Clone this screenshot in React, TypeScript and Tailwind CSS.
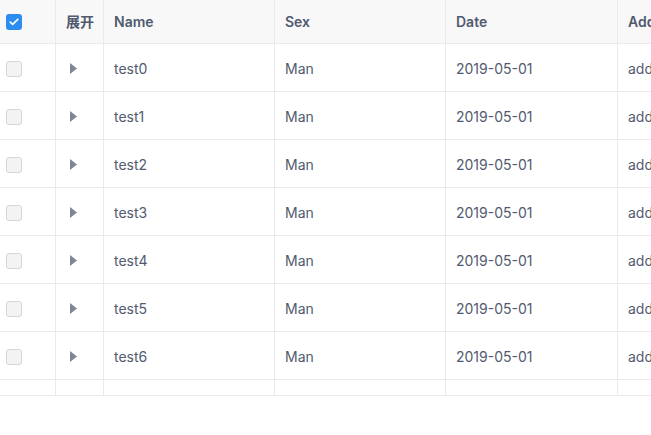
import React from "react";

const rows = Array.from({ length: 8 }, (_, i) => ({
  name: `test${i}`,
  sex: "Man",
  date: "2019-05-01",
  address: `address${i}`,
}));

const grid =
  "grid grid-cols-[56px_48px_171px_171px_172px_240px] w-[858px]";
const cell = "border-r border-[#e8eaec] flex items-center";

function Checkbox({ checked }: { checked?: boolean }) {
  if (checked) {
    return (
      <span className="flex h-4 w-4 items-center justify-center rounded-[3px] bg-[#2d8cf0]">
        <svg viewBox="0 0 16 16" className="h-3 w-3">
          <path
            d="M3 8.2l3.2 3L13 4.5"
            fill="none"
            stroke="white"
            strokeWidth="2.2"
            strokeLinecap="round"
            strokeLinejoin="round"
          />
        </svg>
      </span>
    );
  }
  return (
    <span className="block h-4 w-4 rounded-[3px] border border-[#d3d6de] bg-[#f3f3f3]" />
  );
}

function Caret() {
  return (
    <svg viewBox="0 0 7 11" className="h-[11px] w-[7px]">
      <polygon points="0,0 7,5.5 0,11" fill="#808695" />
    </svg>
  );
}

export default function App() {
  return (
    <div
      className="h-[435px] w-[651px] overflow-hidden bg-white text-sm text-[#515a6e]"
      style={{ fontFamily: 'Inter, "Noto Sans CJK SC", sans-serif' }}
    >
      <div className="h-[396px] overflow-hidden border-b border-[#e8eaec]">
        <div className={`${grid} h-[44px] border-b border-[#e8eaec] bg-[#f8f8f9] font-semibold`}>
          <div className={`${cell} pl-[6px] pt-px`}>
            <Checkbox checked />
          </div>
          <div className={`${cell} pl-[10px]`}>展开</div>
          <div className={`${cell} pl-[10px]`}>Name</div>
          <div className={`${cell} pl-[10px]`}>Sex</div>
          <div className={`${cell} pl-[10px]`}>Date</div>
          <div className={`${cell} pl-[10px]`}>Address</div>
        </div>
        {rows.map((r) => (
          <div key={r.name} className={`${grid} h-[48px] border-b border-[#e8eaec]`}>
            <div className={`${cell} pl-[6px] pt-[3px]`}>
              <Checkbox />
            </div>
            <div className={`${cell} pl-[14px] pt-[2px]`}>
              <Caret />
            </div>
            <div className={`${cell} pl-[10px] pt-[2px]`}>{r.name}</div>
            <div className={`${cell} pl-[10px] pt-[2px]`}>{r.sex}</div>
            <div className={`${cell} pl-[10px] pt-[2px]`}>{r.date}</div>
            <div className={`${cell} pl-[10px] pt-[2px]`}>{r.address}</div>
          </div>
        ))}
      </div>
    </div>
  );
}
